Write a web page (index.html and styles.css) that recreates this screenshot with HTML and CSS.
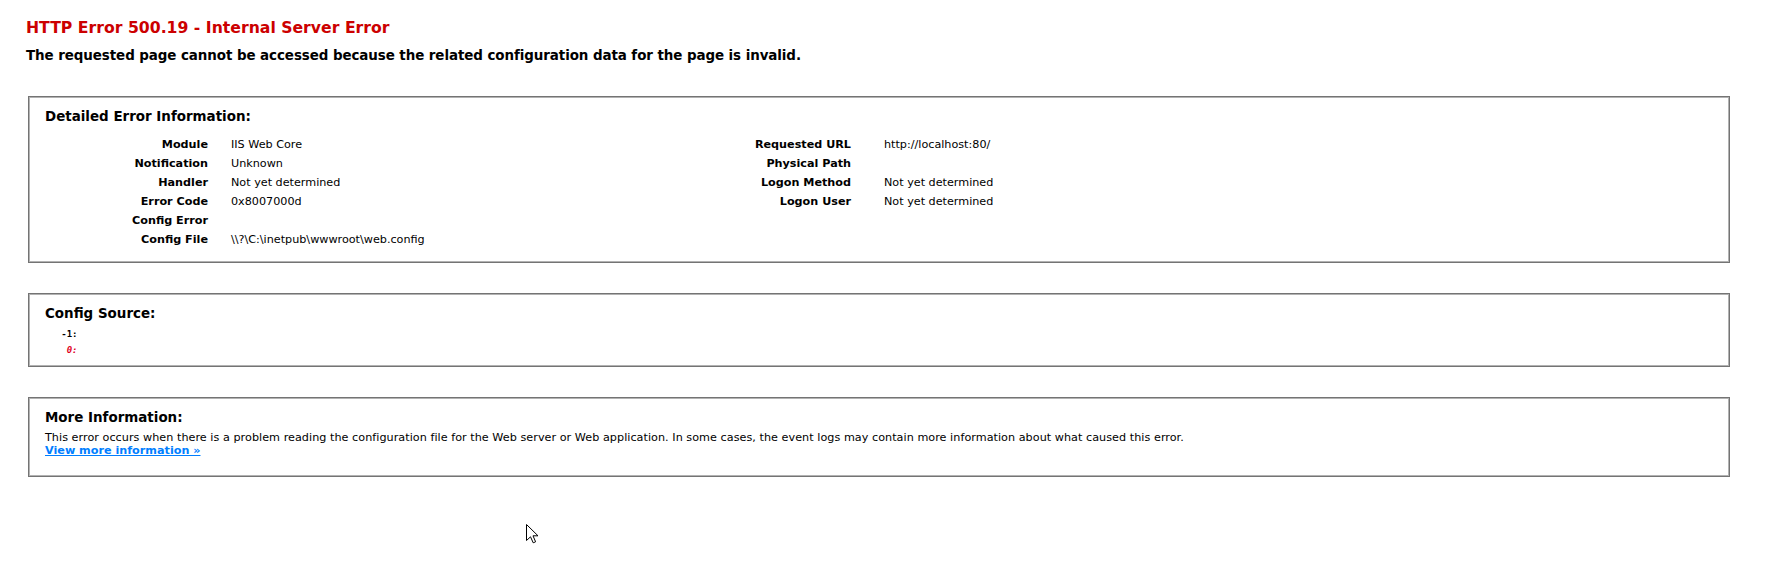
FILE: index.html
```html
<!DOCTYPE html>
<html lang="en">
<head>
<meta charset="utf-8">
<title>IIS 10.0 Detailed Error - 500.19 - Internal Server Error</title>
<link rel="stylesheet" href="styles.css">
</head>
<body>
<div class="page">
  <div class="summary">
    <h3 class="title">HTTP Error 500.19 - Internal Server Error</h3>
    <h4 class="subtitle">The requested page cannot be accessed because the related configuration data for the page is invalid.</h4>
  </div>

  <fieldset class="box box-details">
    <h4 class="box-title">Detailed Error Information:</h4>
    <div class="details">
      <div class="details-left">
        <div class="k">Module</div><div class="v">IIS Web Core</div>
        <div class="k">Notification</div><div class="v">Unknown</div>
        <div class="k">Handler</div><div class="v">Not yet determined</div>
        <div class="k">Error Code</div><div class="v">0x8007000d</div>
        <div class="k">Config Error</div><div class="v"></div>
        <div class="k">Config File</div><div class="v">\\?\C:\inetpub\wwwroot\web.config</div>
      </div>
      <div class="details-right">
        <div class="k">Requested URL</div><div class="v">http://localhost:80/</div>
        <div class="k">Physical Path</div><div class="v"></div>
        <div class="k">Logon Method</div><div class="v">Not yet determined</div>
        <div class="k">Logon User</div><div class="v">Not yet determined</div>
      </div>
    </div>
  </fieldset>

  <fieldset class="box box-source">
    <h4 class="box-title source-title">Config Source:</h4>
    <pre class="source"><code class="line">   -1: </code>
<code class="line err">    0: </code></pre>
  </fieldset>

  <fieldset class="box box-more">
    <h4 class="box-title more-title">More Information:</h4>
    <div class="more-text">This error occurs when there is a problem reading the configuration file for the Web server or Web application. In some cases, the event logs may contain more information about what caused this error.</div>
    <p class="more-link"><a href="#">View more information &raquo;</a></p>
  </fieldset>
</div>

<svg class="cursor" width="13" height="20" viewBox="0 0 13 20" aria-hidden="true">
  <path d="M0.5 0.5 V16.5 L4.5 12.8 L7.2 18.8 L9.6 17.8 L7 11.8 H12 Z" fill="#fff" stroke="#000" stroke-width="1" stroke-linejoin="miter"/>
</svg>
</body>
</html>
```

FILE: styles.css
```css
* {
  box-sizing: border-box;
}

html,
body {
  margin: 0;
  background: #fff;
}

body {
  font-family: "DejaVu Sans", Verdana, sans-serif;
  font-size: 11.2px;
  line-height: 13px;
  color: #000;
}

.page {
  padding: 19px 42px 0 26px;
}

.summary {
  padding: 0;
}

.title {
  margin: 0;
  font-size: 15.68px;
  line-height: 18px;
  font-weight: bold;
  color: #cc0000;
}

.subtitle {
  margin: 11px 0 0 0;
  font-size: 13.44px;
  line-height: 16px;
  font-weight: bold;
  letter-spacing: -0.08px;
  color: #000;
}

.box {
  margin: 30px 2px 0 2px;
  padding: 0 15px 13px 16px;
  border: 1px solid #747474;
  box-shadow: inset 0 0 0 1px #b2b2b2;
  min-inline-size: 0;
}

.box-details {
  margin-top: 32px;
}

.box-title {
  margin: 12px 0 10px 0;
  font-size: 13.44px;
  line-height: 16px;
  font-weight: bold;
  color: #000;
}

.details {
  display: flex;
  align-items: flex-start;
}

.details-left {
  display: grid;
  grid-template-columns: 163px 1fr;
  grid-auto-rows: 19px;
  width: 600px;
}

.details-right {
  display: grid;
  grid-template-columns: 206px 1fr;
  grid-auto-rows: 19px;
  flex: 1;
}

.k,
.v {
  padding: 3px 0;
  line-height: 13px;
  height: 19px;
  white-space: nowrap;
}

.k {
  text-align: right;
  font-weight: bold;
}

.details-left .v {
  padding-left: 23px;
}

.details-right .v {
  padding-left: 33px;
}

.box-source {
  padding-bottom: 8px;
}

.source-title {
  margin-bottom: 4px;
}

.source {
  margin: 0;
  font-family: "DejaVu Sans Mono", "Liberation Mono", monospace;
  font-size: 9px;
  line-height: 16px;
}

.line {
  font-weight: bold;
  color: #000;
}

.line.err {
  color: #e0001b;
  font-style: italic;
}

.box-more {
  padding-bottom: 19px;
}

.more-title {
  margin-bottom: 5px;
}

.more-text {
  line-height: 13px;
  letter-spacing: 0.04px;
}

.more-link {
  margin: 0;
  line-height: 13px;
}

.more-link a {
  color: #007eff;
  font-weight: bold;
  text-decoration: underline;
}

.cursor {
  position: absolute;
  left: 526px;
  top: 524px;
}
```
